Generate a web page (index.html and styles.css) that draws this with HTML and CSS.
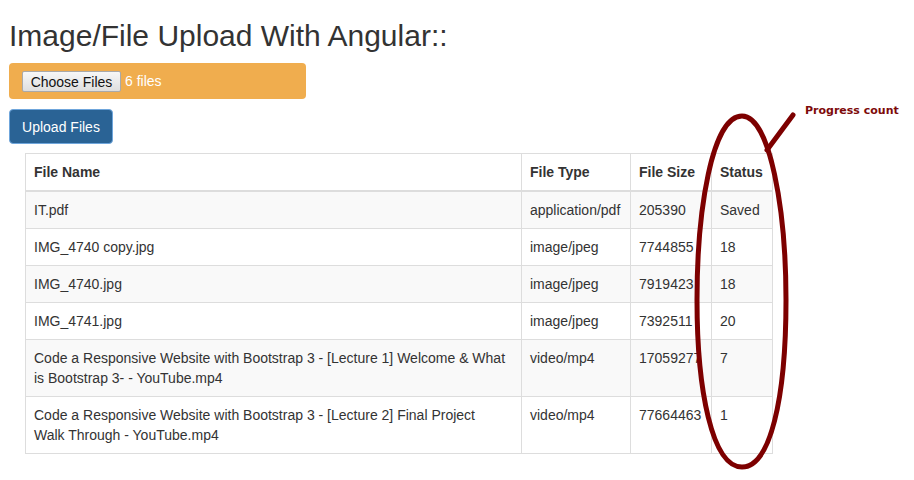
FILE: index.html
```html
<!DOCTYPE html>
<html>
<head>
<meta charset="utf-8">
<link rel="stylesheet" href="styles.css">
</head>
<body>
<div class="page">
  <h1 class="title">Image/File Upload With Angular::</h1>
  <div class="file-bar">
    <span class="choose-btn">Choose Files</span>
    <span class="file-count">6 files</span>
  </div>
  <button class="upload-btn">Upload Files</button>
  <table class="files">
    <colgroup>
      <col class="c-name">
      <col class="c-type">
      <col class="c-size">
      <col class="c-status">
    </colgroup>
    <thead>
      <tr><th>File Name</th><th>File Type</th><th>File Size</th><th>Status</th></tr>
    </thead>
    <tbody>
      <tr><td>IT.pdf</td><td>application/pdf</td><td>205390</td><td>Saved</td></tr>
      <tr><td>IMG_4740 copy.jpg</td><td>image/jpeg</td><td>7744855</td><td>18</td></tr>
      <tr><td>IMG_4740.jpg</td><td>image/jpeg</td><td>7919423</td><td>18</td></tr>
      <tr><td>IMG_4741.jpg</td><td>image/jpeg</td><td>7392511</td><td>20</td></tr>
      <tr><td>Code a Responsive Website with Bootstrap 3 - [Lecture 1] Welcome &amp; What is Bootstrap 3- - YouTube.mp4</td><td>video/mp4</td><td>17059277</td><td>7</td></tr>
      <tr><td>Code a Responsive Website with Bootstrap 3 - [Lecture 2] Final Project Walk Through - YouTube.mp4</td><td>video/mp4</td><td>77664463</td><td>1</td></tr>
    </tbody>
  </table>
</div>
<svg class="annot" width="914" height="480" viewBox="0 0 914 480">
  <path d="M742,116 C770,116 786,210 786,300 C786,400 770,467 742,467 C712,467 697,390 697,300 C697,210 712,116 742,116 Z" fill="none" stroke="#7d0000" stroke-width="5"/>
  <path d="M767,150 L793,115" fill="none" stroke="#7d0000" stroke-width="5" stroke-linecap="round"/>
</svg>
<div class="annot-label">Progress count</div>
</body>
</html>
```
FILE: styles.css
```css
html, body {
  margin: 0;
  padding: 0;
  background: #ffffff;
}
body {
  font-family: "Liberation Sans", Arial, Helvetica, sans-serif;
  font-size: 14px;
  line-height: 20px;
  color: #333333;
  position: relative;
  width: 914px;
  height: 480px;
  overflow: hidden;
}
.page {
  padding: 19px 9px 0 9px;
  display: flex;
  flex-direction: column;
  align-items: flex-start;
}
.title {
  margin: 0 0 11px 0;
  font-size: 30px;
  line-height: 33px;
  font-weight: normal;
  color: #333333;
}
.file-bar {
  box-sizing: border-box;
  width: 297px;
  height: 36px;
  background: #f0ad4e;
  border-radius: 4px;
  display: flex;
  align-items: center;
  padding: 0 13px;
  gap: 4px;
}
.choose-btn {
  box-sizing: border-box;
  display: inline-flex;
  align-items: center;
  justify-content: center;
  width: 99px;
  height: 21px;
  margin-top: 1px;
  background: linear-gradient(#f7f7f7, #dedede);
  border: 1px solid #a9a9a9;
  border-radius: 2px;
  color: #111111;
  font-size: 14px;
}
.file-count {
  color: #ffffff;
  font-size: 14px;
}
.upload-btn {
  margin-top: 10px;
  box-sizing: border-box;
  width: 104px;
  height: 35px;
  background: #2a6395;
  border: 1px solid #6fa6dc;
  border-radius: 4px;
  color: #ffffff;
  font-family: "Liberation Sans", Arial, sans-serif;
  font-size: 14px;
  padding: 0;
}
.files {
  margin-top: 9px;
  margin-left: 16px;
  border-collapse: collapse;
  table-layout: fixed;
  width: 747px;
}
.c-name { width: 496px; }
.c-type { width: 109px; }
.c-size { width: 81px; }
.c-status { width: 61px; }
.files th,
.files td {
  border: 1px solid #dddddd;
  padding: 8px;
  text-align: left;
  vertical-align: top;
  line-height: 20px;
}
.files th:first-child,
.files td:first-child {
  padding-right: 13px;
}
.files th {
  font-weight: bold;
  vertical-align: bottom;
  border-bottom-width: 2px;
}
.files tbody tr:nth-child(odd) td {
  background: #f9f9f9;
}
.annot {
  position: absolute;
  left: 0;
  top: 0;
  pointer-events: none;
}
.annot-label {
  position: absolute;
  left: 805px;
  top: 103px;
  font-family: "DejaVu Sans", Verdana, sans-serif;
  font-weight: bold;
  font-size: 11px;
  line-height: 16px;
  color: #7d0a0a;
}
```
